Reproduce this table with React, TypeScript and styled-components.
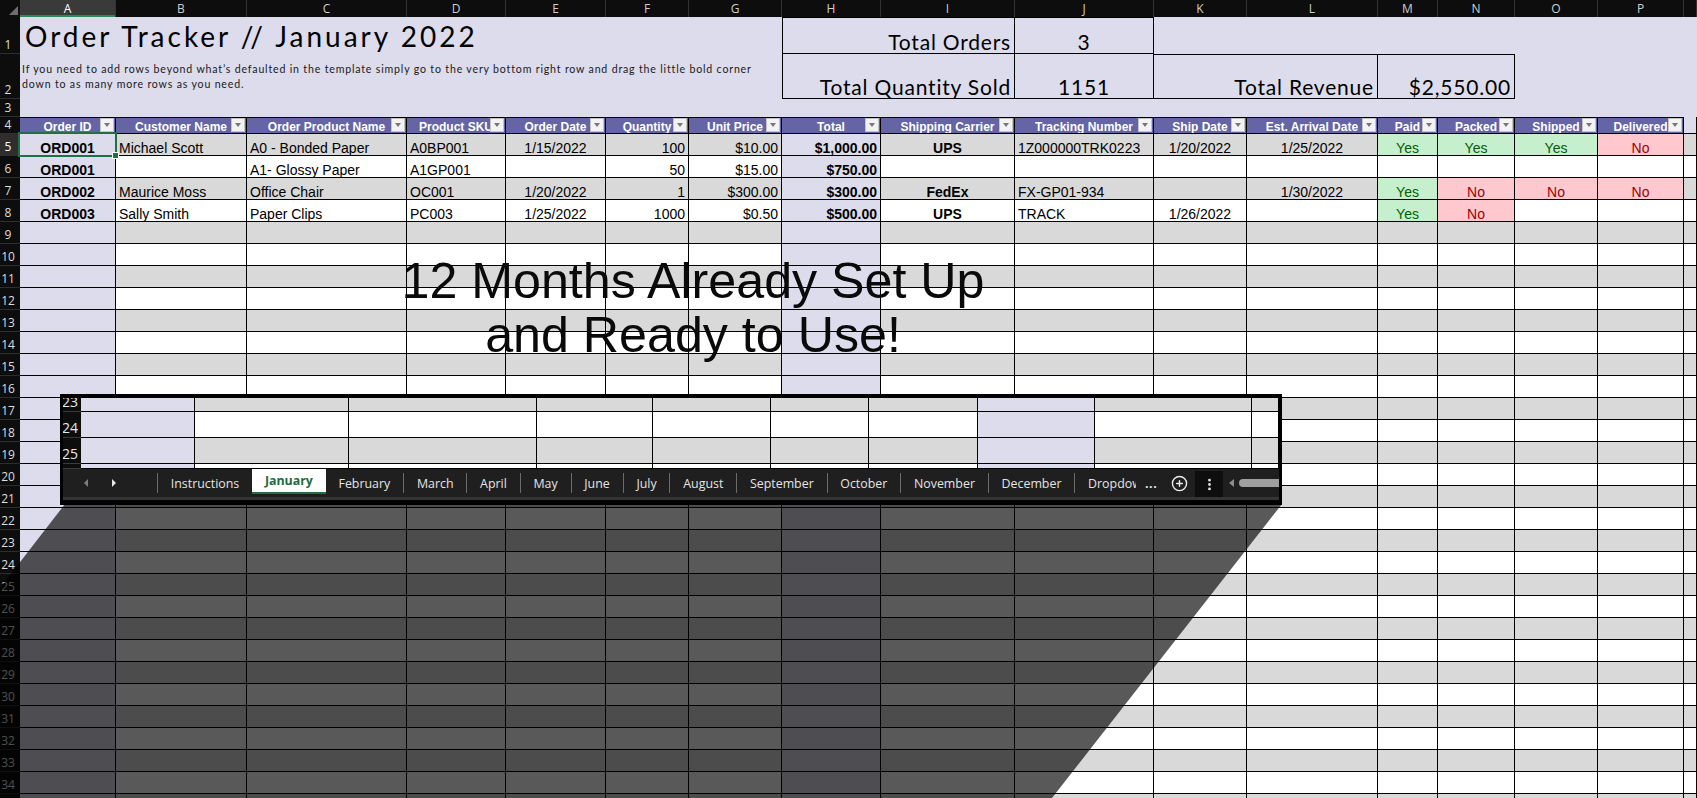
import React from "react";
import styled, { createGlobalStyle, css } from "styled-components";
import { CirclePlus, EllipsisVertical } from "lucide-react";

const LAV = "#dcdcec";
const GREY = "#d9d9d9";
const PURPLE = "#6565a5";
const GOTHIC = `"Lato", "DejaVu Sans", sans-serif`;
const ARIAL = `"Liberation Sans", Arial, sans-serif`;
const UI = `"Open Sans", "Noto Sans", sans-serif`;

const COLS = [96, 131, 160, 99, 100, 83, 93, 99, 134, 139, 93, 131, 60, 77, 83, 86];
const LETTERS = "ABCDEFGHIJKLMNOP".split("");

type Align = "left" | "center" | "right";
type ColSpec = { title: string; align: Align; bold?: boolean; status?: boolean; lav?: boolean };

const SPEC: ColSpec[] = [
  { title: "Order ID", align: "center", bold: true, lav: true },
  { title: "Customer Name", align: "left" },
  { title: "Order Product Name", align: "left" },
  { title: "Product SKU", align: "left" },
  { title: "Order Date", align: "center" },
  { title: "Quantity", align: "right" },
  { title: "Unit Price", align: "right" },
  { title: "Total", align: "right", bold: true, lav: true },
  { title: "Shipping Carrier", align: "center", bold: true },
  { title: "Tracking Number", align: "left" },
  { title: "Ship Date", align: "center" },
  { title: "Est. Arrival Date", align: "center" },
  { title: "Paid", align: "center", status: true },
  { title: "Packed", align: "center", status: true },
  { title: "Shipped", align: "center", status: true },
  { title: "Delivered", align: "center", status: true },
];

const DATA: string[][] = [
  ["ORD001", "Michael Scott", "A0 - Bonded Paper", "A0BP001", "1/15/2022", "100", "$10.00", "$1,000.00", "UPS", "1Z000000TRK0223", "1/20/2022", "1/25/2022", "Yes", "Yes", "Yes", "No"],
  ["ORD001", "", "A1- Glossy Paper", "A1GP001", "", "50", "$15.00", "$750.00", "", "", "", "", "", "", "", ""],
  ["ORD002", "Maurice Moss", "Office Chair", "OC001", "1/20/2022", "1", "$300.00", "$300.00", "FedEx", "FX-GP01-934", "", "1/30/2022", "Yes", "No", "No", "No"],
  ["ORD003", "Sally Smith", "Paper Clips", "PC003", "1/25/2022", "1000", "$0.50", "$500.00", "UPS", "TRACK", "1/26/2022", "", "Yes", "No", "", ""],
];

const TABS = ["Instructions", "January", "February", "March", "April", "May", "June", "July", "August", "September", "October", "November", "December"];

const GlobalStyle = createGlobalStyle`
  html, body { margin: 0; padding: 0; background: #000; }
  body { font-family: ${ARIAL}; overflow: hidden; }
`;

const Sheet = styled.div`
  position: relative;
  width: 1697px;
  height: 798px;
  overflow: hidden;
  display: grid;
  grid-template-columns: 20px ${COLS.map((w) => `${w}px`).join(" ")} 1fr;
  grid-template-rows: 17px 37px 45px 18px 17px repeat(31, 22px);
  background: #fff;
`;

const Corner = styled.div`
  position: relative;
  background: #0d0d0d;
  &::after {
    content: "";
    position: absolute;
    right: 2px;
    bottom: 2px;
    border-style: solid;
    border-width: 0 0 9px 9px;
    border-color: transparent transparent #6e6e6e transparent;
  }
`;

const ColHead = styled.div<{ $active?: boolean }>`
  display: flex;
  align-items: center;
  justify-content: center;
  box-sizing: border-box;
  background: ${(p) => (p.$active ? "#3a3a3a" : "#0d0d0d")};
  color: ${(p) => (p.$active ? "#ffffff" : "#cfcfcf")};
  font: 400 12px/12px ${UI};
  border-right: 1px solid #333;
  box-shadow: ${(p) => (p.$active ? "inset 0 -2px 0 #2f8a55" : "none")};
`;

const RowHead = styled.div<{ $active?: boolean }>`
  display: flex;
  align-items: flex-end;
  justify-content: center;
  box-sizing: border-box;
  padding: 0 4px 1px 0;
  background: ${(p) => (p.$active ? "#2e2e2e" : "#0d0d0d")};
  color: ${(p) => (p.$active ? "#ffffff" : "#dedede")};
  font: 400 12px/14px ${UI};
  border-bottom: 1px solid #2e2e2e;
  overflow: hidden;
`;

const TitleBand = styled.div`
  grid-column: 2 / -1;
  grid-row: 2 / 5;
  background: ${LAV};
`;

const Title = styled.h1`
  grid-column: 2 / 10;
  grid-row: 2;
  align-self: end;
  margin: 0;
  padding: 0 0 4px 5px;
  font: 400 28px/28px ${GOTHIC};
  letter-spacing: 3px;
  color: #000;
  white-space: nowrap;
`;

const Note = styled.p`
  grid-column: 2 / 10;
  grid-row: 3;
  margin: 0;
  padding: 8px 0 0 2px;
  font: 400 10.6px/14.5px ${GOTHIC};
  letter-spacing: 0.82px;
  color: #1a1a1a;
  white-space: nowrap;
`;

const TotalCell = styled.div<{ $col: string; $row: number; $align: "center" | "right"; $top?: boolean; $left?: boolean }>`
  grid-column: ${(p) => p.$col};
  grid-row: ${(p) => p.$row};
  box-sizing: border-box;
  display: flex;
  align-items: flex-end;
  justify-content: ${(p) => (p.$align === "center" ? "center" : "flex-end")};
  padding: 0 3px 1px;
  border-right: 1px solid #000;
  border-bottom: 1px solid #000;
  border-top: ${(p) => (p.$top ? "1px solid #000" : "none")};
  border-left: ${(p) => (p.$left ? "1px solid #000" : "none")};
  font: 400 21px/21px ${GOTHIC};
  letter-spacing: 0.8px;
  color: #000;
  white-space: nowrap;
`;

const HeadCell = styled.div`
  position: relative;
  box-sizing: border-box;
  display: flex;
  align-items: flex-end;
  justify-content: center;
  background: ${PURPLE};
  border-top: 1px solid #000;
  border-right: 1px solid #000;
  border-bottom: 1px solid #000;
  font: 700 12px/12px ${ARIAL};
  color: #fff;
  white-space: nowrap;
  overflow: hidden;
`;

const FilterBtn = styled.span`
  position: absolute;
  right: 1px;
  top: 0;
  width: 14px;
  height: 14px;
  box-sizing: border-box;
  background: #f3f3f3;
  border: 1px solid #c4c4c4;
  &::after {
    content: "";
    position: absolute;
    left: 50%;
    top: 4px;
    margin-left: -3.5px;
    border-left: 3.5px solid transparent;
    border-right: 3.5px solid transparent;
    border-top: 4px solid #767676;
  }
`;

const Cell = styled.div<{ $bg: string; $align: Align; $bold?: boolean; $fg?: string; $sel?: boolean }>`
  position: relative;
  box-sizing: border-box;
  display: flex;
  align-items: flex-end;
  justify-content: ${(p) => (p.$align === "left" ? "flex-start" : p.$align === "right" ? "flex-end" : "center")};
  padding: 0 3px;
  background: ${(p) => p.$bg};
  border-right: 1px solid #000;
  border-bottom: 1px solid #000;
  font-family: ${ARIAL};
  font-size: 14px;
  line-height: 14px;
  font-weight: ${(p) => (p.$bold ? 700 : 400)};
  color: ${(p) => p.$fg ?? "#000"};
  white-space: nowrap;
  overflow: ${(p) => (p.$sel ? "visible" : "hidden")};
  z-index: ${(p) => (p.$sel ? 2 : "auto")};
`;

const Selection = styled.span`
  position: absolute;
  left: -2px;
  top: -2px;
  right: -2px;
  bottom: -2px;
  border: 2px solid #1e7145;
  pointer-events: none;
  &::after {
    content: "";
    position: absolute;
    right: -4px;
    bottom: -4px;
    width: 5px;
    height: 5px;
    background: #1e7145;
    border: 1px solid #fff;
  }
`;

const BigText = styled.div`
  position: absolute;
  left: 293px;
  top: 253.5px;
  width: 800px;
  text-align: center;
  font: 400 50.2px/54px ${ARIAL};
  color: #0a0a0a;
  z-index: 3;
  pointer-events: none;
`;

const Shadow = styled.svg`
  position: absolute;
  left: 0;
  top: 0;
  width: 1697px;
  height: 798px;
  z-index: 4;
  pointer-events: none;
`;

const Magnifier = styled.div`
  position: absolute;
  left: 60px;
  top: 394px;
  width: 1222px;
  height: 111px;
  box-sizing: border-box;
  border-style: solid;
  border-color: #000;
  border-width: 4px 3px 5px 3px;
  background: #000;
  display: flex;
  flex-direction: column;
  overflow: hidden;
  z-index: 5;
`;

const ZoomGrid = styled.div`
  flex: none;
  height: 71px;
  display: grid;
  grid-template-columns: 18px 114px 154px 188px 116px 118px 98px 109px 117px 157px 1fr;
  grid-template-rows: 14px 26px 26px 5px;
`;

const ZoomCell = styled.div<{ $bg: string }>`
  box-sizing: border-box;
  background: ${(p) => p.$bg};
  border-right: 1px solid #000;
  border-bottom: 1px solid #000;
`;

const ZoomRowHead = styled.div`
  box-sizing: border-box;
  display: flex;
  align-items: flex-end;
  justify-content: flex-start;
  padding: 0 0 3px 0;
  background: #0d0d0d;
  border-bottom: 1px solid #3a3a3a;
  color: #e8e8e8;
  font: 400 14px/12px ${UI};
  overflow: hidden;
  text-indent: -1px;
`;

const TabBar = styled.div`
  flex: none;
  display: flex;
  align-items: center;
  height: 28px;
  background: #1f1f1f;
  border-bottom: 3px solid #343434;
  font-family: ${UI};
  font-size: 12.4px;
  color: #e4e4e4;
  white-space: nowrap;
`;

const Nav = styled.div`
  flex: none;
  width: 94px;
  align-self: stretch;
  box-sizing: border-box;
  display: flex;
  align-items: center;
  gap: 24px;
  padding-left: 21px;
`;

const NavArrow = styled.span<{ $dir: "left" | "right" }>`
  width: 0;
  height: 0;
  border-top: 4px solid transparent;
  border-bottom: 4px solid transparent;
  ${(p) =>
    p.$dir === "left"
      ? css`border-right: 4px solid #7d7d7d;`
      : css`border-left: 4px solid #e6e6e6;`}
`;

const Sep = styled.span`
  flex: none;
  width: 1px;
  height: 20px;
  background: #6b6b6b;
`;

const Tab = styled.span<{ $active?: boolean; $tight?: boolean }>`
  flex: none;
  display: flex;
  align-items: center;
  align-self: stretch;
  box-sizing: border-box;
  padding: ${(p) => (p.$tight ? "0 0 0 12.8px" : "0 12.8px")};
  ${(p) =>
    p.$active &&
    css`
      align-self: flex-start;
      height: 25px;
      background: #fff;
      color: #1e6b3f;
      font-weight: 700;
      border-bottom: 2px solid #1e7145;
    `}
`;

const Clip = styled.span`
  display: inline-block;
  width: 48px;
  overflow: hidden;
`;

const More = styled.span`
  flex: none;
  margin-left: 9px;
  color: #e6e6e6;
  font-weight: 700;
  letter-spacing: 0.5px;
`;

const PlusBtn = styled.span`
  flex: none;
  display: flex;
  margin-left: 14px;
  color: #ececec;
`;

const MenuBtn = styled.span`
  flex: none;
  align-self: flex-end;
  width: 28px;
  height: 26px;
  margin-left: 7px;
  display: flex;
  align-items: center;
  justify-content: center;
  background: #0e0e0e;
  color: #e6e6e6;
`;

const Scroll = styled.span`
  flex: 1;
  display: flex;
  align-items: center;
  gap: 5px;
  padding-left: 6px;
  overflow: hidden;
`;

const ScrollTri = styled.span`
  flex: none;
  width: 0;
  height: 0;
  border-top: 4px solid transparent;
  border-bottom: 4px solid transparent;
  border-right: 5px solid #8c8c8c;
`;

const Thumb = styled.span`
  flex: none;
  width: 60px;
  height: 8px;
  border-radius: 4px;
  background: #a0a0a0;
`;

const ZOOM_ROWS = [23, 24, 25, 26];
const ZOOM_LAV = [0, 7];

function Magnified() {
  return (
    <Magnifier>
      <ZoomGrid>
        {ZOOM_ROWS.map((r) => {
          const base = r % 2 === 1 ? GREY : "#fff";
          return (
            <React.Fragment key={r}>
              <ZoomRowHead>{r < 26 ? r : ""}</ZoomRowHead>
              {Array.from({ length: 10 }, (_, c) => (
                <ZoomCell key={c} $bg={ZOOM_LAV.includes(c) ? LAV : base} />
              ))}
            </React.Fragment>
          );
        })}
      </ZoomGrid>
      <TabBar>
        <Nav>
          <NavArrow $dir="left" />
          <NavArrow $dir="right" />
        </Nav>
        <Sep />
        {TABS.map((t, i) => {
          const active = t === "January";
          const prevActive = TABS[i - 1] === "January";
          return (
            <React.Fragment key={t}>
              {i > 0 && !active && !prevActive && <Sep />}
              <Tab $active={active}>{t}</Tab>
            </React.Fragment>
          );
        })}
        <Sep />
        <Tab $tight>
          <Clip>Dropdowns</Clip>
        </Tab>
        <More>...</More>
        <PlusBtn>
          <CirclePlus size={17} strokeWidth={2} />
        </PlusBtn>
        <MenuBtn>
          <EllipsisVertical size={15} strokeWidth={2.5} />
        </MenuBtn>
        <Scroll>
          <ScrollTri />
          <Thumb />
        </Scroll>
      </TabBar>
    </Magnifier>
  );
}

export default function App() {
  const rows = Array.from({ length: 31 }, (_, i) => i + 5);
  return (
    <>
      <GlobalStyle />
      <Sheet>
        <Corner />
        {LETTERS.map((l, i) => (
          <ColHead key={l} $active={i === 0}>
            {l}
          </ColHead>
        ))}
        <ColHead />

        <TitleBand />
        <RowHead>1</RowHead>
        <RowHead>2</RowHead>
        <RowHead>3</RowHead>
        <Title>Order Tracker // January 2022</Title>
        <Note>
          If you need to add rows beyond what’s defaulted in the template simply go to the very bottom right row and drag the little bold corner
          <br />
          down to as many more rows as you need.
        </Note>
        <TotalCell $col="9 / 11" $row={2} $align="right" $top $left>
          Total Orders
        </TotalCell>
        <TotalCell $col="11 / 12" $row={2} $align="center" $top>
          3
        </TotalCell>
        <TotalCell $col="9 / 11" $row={3} $align="right" $left>
          Total Quantity Sold
        </TotalCell>
        <TotalCell $col="11 / 12" $row={3} $align="center">
          1151
        </TotalCell>
        <TotalCell $col="12 / 14" $row={3} $align="right" $top>
          Total Revenue
        </TotalCell>
        <TotalCell $col="14 / 16" $row={3} $align="right" $top>
          $2,550.00
        </TotalCell>

        <RowHead>4</RowHead>
        {SPEC.map((s) => (
          <HeadCell key={s.title}>
            {s.title}
            <FilterBtn />
          </HeadCell>
        ))}
        <Cell $bg={LAV} $align="left" />

        {rows.map((r) => {
          const d = DATA[r - 5];
          const base = r % 2 === 1 ? GREY : "#fff";
          return (
            <React.Fragment key={r}>
              <RowHead $active={r === 5}>{r}</RowHead>
              {SPEC.map((s, c) => {
                const val = d ? d[c] : "";
                let bg = s.lav ? LAV : base;
                let fg: string | undefined;
                if (s.status && val) {
                  bg = val === "Yes" ? "#c6efce" : "#ffc7ce";
                  fg = val === "Yes" ? "#006100" : "#9c0006";
                }
                const sel = r === 5 && c === 0;
                return (
                  <Cell key={c} $bg={bg} $fg={fg} $align={s.align} $bold={s.bold} $sel={sel}>
                    {val}
                    {sel && <Selection />}
                  </Cell>
                );
              })}
              <Cell $bg={base} $align="left" />
            </React.Fragment>
          );
        })}

        <BigText>
          12 Months Already Set Up
          <br />
          and Ready to Use!
        </BigText>

        <Shadow viewBox="0 0 1697 798">
          <polygon points="65,504 1282,504 1052,798 0,798 0,588" fill="rgba(0,0,0,0.65)" />
        </Shadow>

        <Magnified />
      </Sheet>
    </>
  );
}
